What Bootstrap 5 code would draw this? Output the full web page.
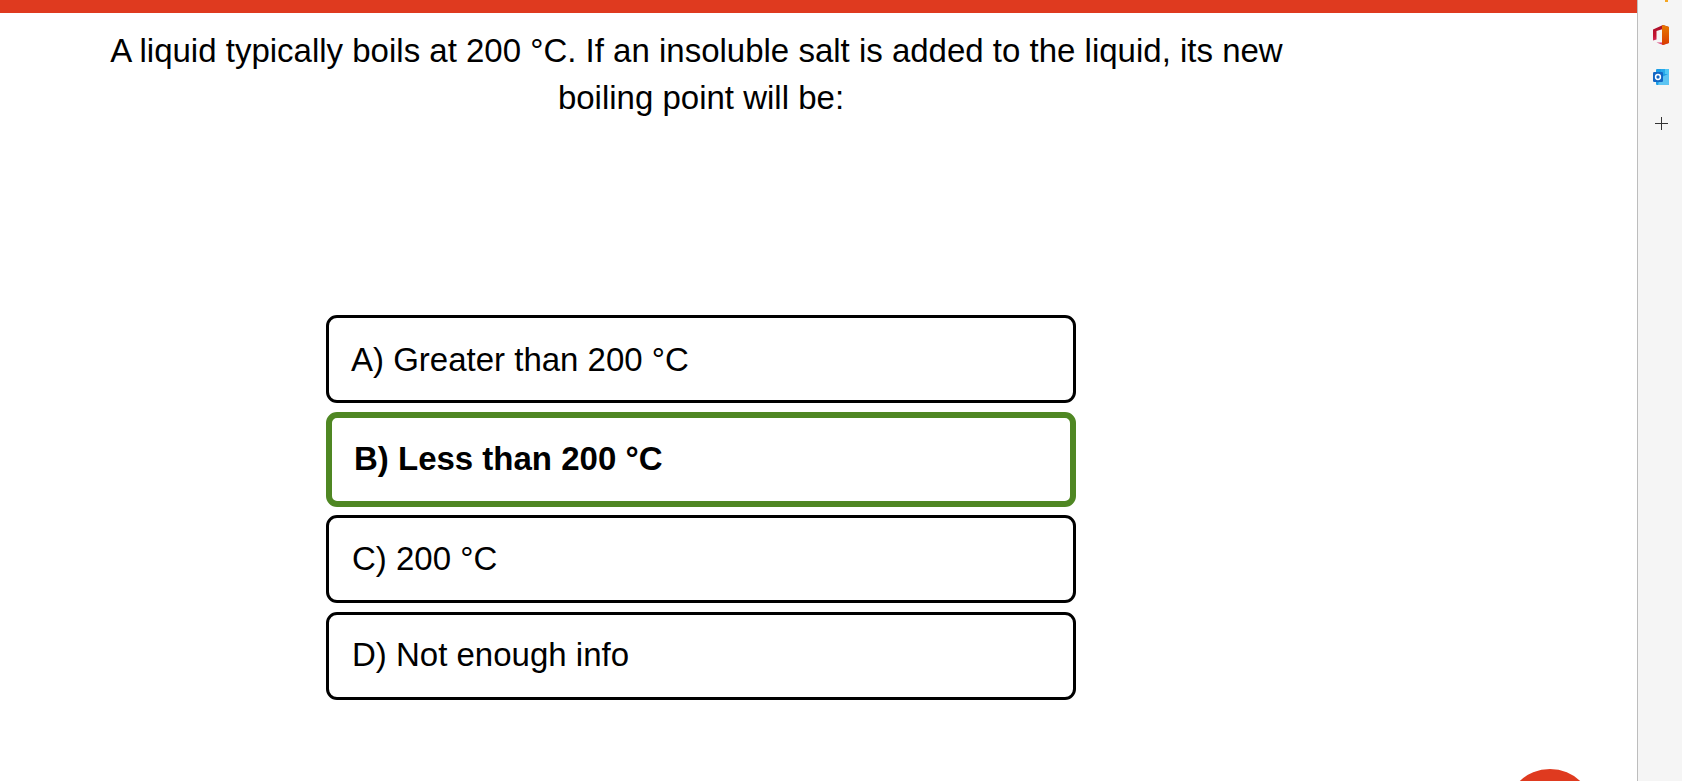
<!DOCTYPE html>
<html lang="en">
<head>
<meta charset="utf-8">
<title>Quiz</title>
<link href="https://cdn.jsdelivr.net/npm/bootstrap@5.3.0/dist/css/bootstrap.min.css" rel="stylesheet">
<style>
html, body { height: 100%; overflow: hidden; background: #fff; }
body { font-family: "Liberation Sans", Arial, sans-serif; color: #000; }
.app-shell { height: 781px; }
.main-pane { width: 1637px; flex: none; position: relative; overflow: hidden; }
.top-strip { height: 13px; background: #df3a1f; }
.quiz-q { width: 1200px; margin: 0 0 0 101px; padding-top: 14px; height: 302px; font-size: 33px; line-height: 47px; text-align: center; font-weight: 400; }
.opts { width: 750px; margin-left: 326px; }
.opt { height: 88px; border: 3px solid #000; border-radius: 11px; padding-left: 22px; font-size: 33px; background: #fff; margin-bottom: 9px; }
.opt-first { padding-top: 2px; }
.opt-right { height: 95px; border: 6px solid #4f8723; font-weight: 700; padding-left: 22px; padding-bottom: 2px; margin-bottom: 8px; }
.opt-nudge { padding-left: 23px; }
.opt-last { padding-bottom: 2px; }
.fab-dot { position: absolute; left: 1506px; top: 769px; width: 88px; height: 88px; border-radius: 50%; background: #df3a1f; }
.side-rail { width: 45px; flex: none; background: #f5f5f5; border-left: 1px solid #bdbdbd; position: relative; padding: 25px 0 0 2px; gap: 24px; }
.rail-office { width: 16px; height: 20px; }
.rail-outlook { width: 16px; height: 16px; }
.rail-plus { width: 13px; height: 13px; margin-top: 8px; }
.peek { position: absolute; left: 27px; top: 0; width: 3px; height: 2px; background: #f5a623; }
</style>
</head>
<body>
<div class="app-shell d-flex">
  <main class="main-pane">
    <div class="top-strip"></div>
    <h1 class="quiz-q">A liquid typically boils at 200 °C. If an insoluble salt is added to the liquid, its new&nbsp;<br>boiling point will be:</h1>
    <div class="opts">
      <div class="opt opt-first d-flex align-items-center">A) Greater than 200 °C</div>
      <div class="opt opt-right d-flex align-items-center">B) Less than 200 °C</div>
      <div class="opt opt-nudge d-flex align-items-center">C) 200 °C</div>
      <div class="opt opt-nudge opt-last d-flex align-items-center">D) Not enough info</div>
    </div>
    <div class="fab-dot"></div>
  </main>
  <aside class="side-rail d-flex flex-column align-items-center">
    <span class="peek"></span>
    <svg class="rail-office" viewBox="0 0 16 20" aria-label="Office">
      <defs>
        <linearGradient id="offR" x1="0" y1="0" x2="0" y2="1"><stop offset="0" stop-color="#e87a00"/><stop offset="1" stop-color="#d83b01"/></linearGradient>
        <linearGradient id="offL" x1="0" y1="0" x2="0" y2="1"><stop offset="0" stop-color="#a8102a"/><stop offset="0.55" stop-color="#c4142f"/><stop offset="1" stop-color="#e0488a"/></linearGradient>
      </defs>
      <path d="M0 4.5 10 0l6 2v16l-6 2-6.5-2.5H10V4L3.5 6v8.5L0 15.5z" fill="url(#offL)"/>
      <path d="M9 .4 10 0l6 2v16l-6 2-1-.4z" fill="url(#offR)"/>
    </svg>
    <svg class="rail-outlook" viewBox="0 0 16 16" aria-label="Outlook">
      <rect x="3" y="0" width="13" height="16" rx="1" fill="#1c9ee6"/>
      <path d="M8 0h4v5H8z" fill="#28a8ea"/>
      <path d="M12 0h3a1 1 0 0 1 1 1v4h-4z" fill="#50c8f5"/>
      <path d="M7 9l9-4.5V15a1 1 0 0 1-1 1H5z" fill="#5cc4f2"/>
      <rect x="0" y="3" width="10" height="10" rx="1.2" fill="#1467c4"/>
      <circle cx="5" cy="8" r="2.4" fill="none" stroke="#fff" stroke-width="1.5"/>
    </svg>
    <svg class="rail-plus" viewBox="0 0 13 13" aria-label="Add">
      <path d="M6.5 0v13M0 6.5h13" stroke="#333" stroke-width="1"/>
    </svg>
  </aside>
</div>
<script src="https://cdn.jsdelivr.net/npm/bootstrap@5.3.0/dist/js/bootstrap.bundle.min.js"></script>
</body>
</html>
